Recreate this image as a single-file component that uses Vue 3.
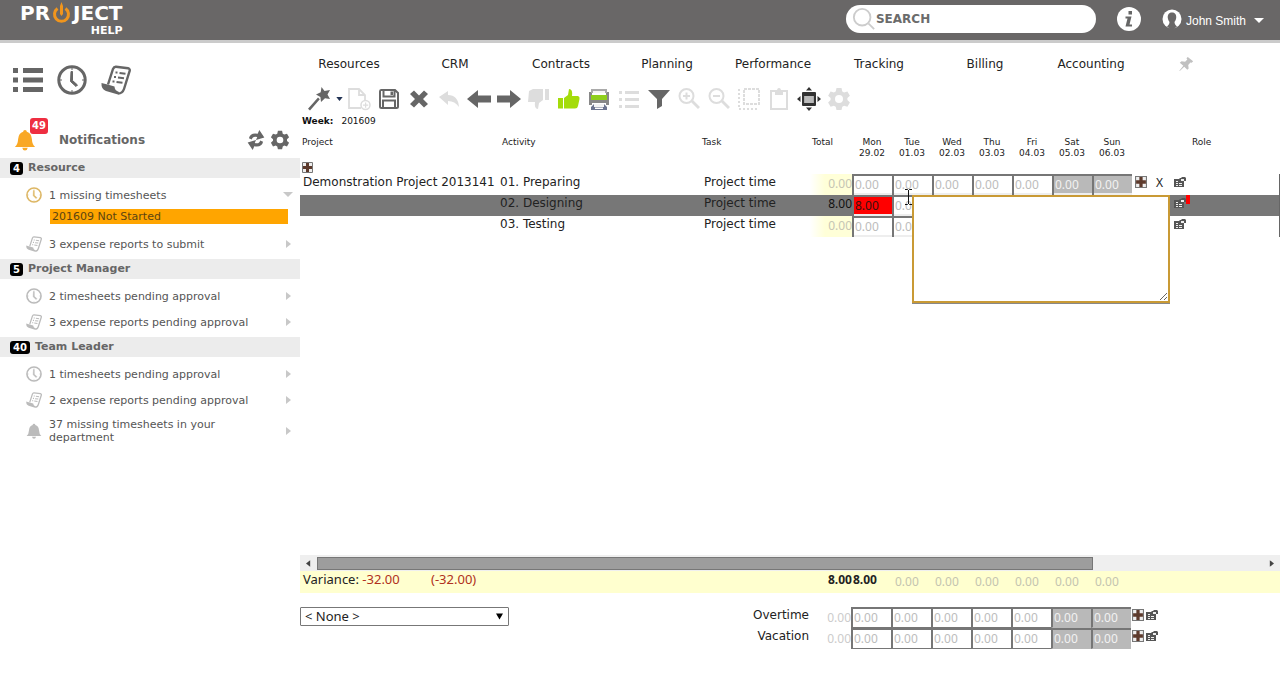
<script setup>
import { ref } from 'vue'

const menu = ['Resources', 'CRM', 'Contracts', 'Planning', 'Performance', 'Tracking', 'Billing', 'Accounting']

const tools = [
  { icon: 'new', label: 'New', tone: 'off' },
  { icon: 'save', label: 'Save', tone: 'on' },
  { icon: 'delete', label: 'Delete', tone: 'on' },
  { icon: 'undo', label: 'Undo', tone: 'off' },
  { icon: 'prev', label: 'Previous week', tone: 'on' },
  { icon: 'next', label: 'Next week', tone: 'on' },
  { icon: 'reject', label: 'Reject', tone: 'off' },
  { icon: 'approve', label: 'Approve', tone: 'green' },
  { icon: 'print', label: 'Print', tone: 'on' },
  { icon: 'rows', label: 'List', tone: 'off' },
  { icon: 'filter', label: 'Filter', tone: 'on' },
  { icon: 'zoomin', label: 'Zoom in', tone: 'off' },
  { icon: 'zoomout', label: 'Zoom out', tone: 'off' },
  { icon: 'copy', label: 'Copy', tone: 'off' },
  { icon: 'paste', label: 'Paste', tone: 'off' },
  { icon: 'full', label: 'Full screen', tone: 'dark' },
  { icon: 'gear', label: 'Settings', tone: 'off' }
]

const sections = [
  {
    count: 4,
    title: 'Resource',
    items: [
      { icon: 'clock', text: '1 missing timesheets', open: true, sub: '201609 Not Started', gold: true },
      { icon: 'report', text: '3 expense reports to submit' }
    ]
  },
  {
    count: 5,
    title: 'Project Manager',
    items: [
      { icon: 'clock', text: '2 timesheets pending approval' },
      { icon: 'report', text: '3 expense reports pending approval' }
    ]
  },
  {
    count: 40,
    title: 'Team Leader',
    items: [
      { icon: 'clock', text: '1 timesheets pending approval' },
      { icon: 'report', text: '2 expense reports pending approval' },
      { icon: 'bell', text: '37 missing timesheets in your department', tall: true }
    ]
  }
]

const days = [
  { name: 'Mon', date: '29.02' },
  { name: 'Tue', date: '01.03' },
  { name: 'Wed', date: '02.03' },
  { name: 'Thu', date: '03.03' },
  { name: 'Fri', date: '04.03' },
  { name: 'Sat', date: '05.03', weekend: true },
  { name: 'Sun', date: '06.03', weekend: true }
]

const blank = () => days.map(() => '0.00')
const rows = ref([
  { project: 'Demonstration Project 2013141', activity: '01. Preparing', total: '0.00', hours: blank(), first: true },
  { project: '', activity: '02. Designing', total: '8.00', hours: ['8.00', ...blank().slice(1)], active: true },
  { project: '', activity: '03. Testing', total: '0.00', hours: blank() }
])
const extras = ref([
  { name: 'Overtime', hours: blank() },
  { name: 'Vacation', hours: blank() }
])
const note = ref('')
</script>

<template>
  <div class="page">
    <svg class="sprite" aria-hidden="true">
      <symbol id="list" viewBox="0 0 30 30">
        <path d="M0 3h5v5H0zM10 3h20v5H10zM0 12.500h5v5H0zM10 12.500h20v5H10zM0 22h5v5H0zM10 22h20v5H10z" />
      </symbol>
      <symbol id="clock" viewBox="0 0 30 30">
        <circle cx="15" cy="15" r="13.200" fill="none" stroke="currentColor" stroke-width="3" />
        <path d="M14 6.500h1.500v9l5 4.500-1.500 1.500-5.500-5zM15 3v2M3 15h2M25 15h2M15 25v2" stroke="currentColor" stroke-width="1" />
      </symbol>
      <symbol id="report" viewBox="0 0 30 30">
        <path d="M7 19.500L12 4Q13 1.500 15 1.700L27 3.200Q29.500 4 28.500 6.500L23 24Q21.500 28.500 17 28.500" fill="none" stroke="currentColor" stroke-width="2.400" />
        <path d="M.5 18l6 1.500 7 2q0 4 4.500 5.500l-1 2.500L5 26Q0 24 .5 18z" />
        <path d="M14.500 7.500h2M18.500 8l6 .8M13 12h2M17 12.500l6 .8M11.500 16.500h2M15.500 17l6 .8" fill="none" stroke="currentColor" stroke-width="2" />
      </symbol>
      <symbol id="bell" viewBox="0 0 24 24">
        <path d="M12 1q2 0 2 2 5 1.500 5.500 8 .3 6 3.500 8.500H1Q4.200 17 4.500 11 5 4.500 10 3q0-2 2-2zM9 20.500h6q-.5 3-3 3t-3-3z" />
      </symbol>
      <symbol id="gear" viewBox="0 0 24 24">
        <path fill-rule="evenodd" d="M9.500 1h5l.8 3.400 1.800 1 3.300-1 2.500 4.300-2.500 2.400v2l2.500 2.300-2.500 4.300-3.300-1-1.800 1-.8 3.300h-5l-.8-3.300-1.800-1-3.300 1-2.500-4.300 2.500-2.400v-2L1.100 8.700l2.500-4.300 3.300 1 1.800-1zM12 8a4 4 0 1 0 0 8 4 4 0 0 0 0-8z" />
      </symbol>
      <symbol id="sync" viewBox="0 0 24 24">
        <path d="M3.500 10Q5 3 14 4.500L16 0l6 9-10 3 1.500-3.500Q8 7 7 11.500zM20.500 14Q19 21 10 19.500L8 24l-6-9 10-3-1.500 3.500Q16 17 17 12.500z" />
      </symbol>
      <symbol id="wand" viewBox="0 0 24 24">
        <path d="M14.500 0l3 4 5.500-1-2.500 4.500L23 12l-5-.8-4 3.800-.6-5L9 7.500l4.700-2.300zM11 10.500l1.800 1.800L3 23.500 1 21.700z" />
      </symbol>
      <symbol id="new" viewBox="0 0 24 24">
        <path d="M14 21H2V2h10l6 6v5M12 2v6h6" fill="none" stroke="currentColor" stroke-width="1.800" />
        <circle cx="18.500" cy="18" r="4.500" fill="none" stroke="currentColor" stroke-width="1.500" />
        <path d="M18 15.500h1.200v2h2v1.200h-2v2H18v-2h-2v-1.200h2z" />
      </symbol>
      <symbol id="save" viewBox="0 0 24 24">
        <path d="M4 3h14l3 3v13.500q0 1.500-1.500 1.500h-15Q3 21 3 19.500V4.500Q3 3 4 3zM6.500 3v6.500h11V3M6 21v-7.500h12V21" fill="none" stroke="currentColor" stroke-width="2" />
        <path d="M13.500 4.500H16V8h-2.500z" />
      </symbol>
      <symbol id="delete" viewBox="0 0 24 24">
        <path d="M3 7l4-3.500 5 5 5-5L21 7l-5 5 5 5-4 3.500-5-5-5 5L3 17l5-5z" />
      </symbol>
      <symbol id="undo" viewBox="0 0 24 24">
        <path d="M2 10l9-6v4q10 0 11 12-4-6-11-6v4z" />
      </symbol>
      <symbol id="prev" viewBox="0 0 24 24">
        <path d="M0 12L11 3v5.500h13v7H11V21z" />
      </symbol>
      <symbol id="next" viewBox="0 0 24 24">
        <path d="M24 12L13 3v5.500H0v7h13V21z" />
      </symbol>
      <symbol id="reject" viewBox="0 0 24 24">
        <path d="M2 4l4-2h10v11l-4 3-1 6q-4 0-3-7H1zM18 2h4v11h-4z" />
      </symbol>
      <symbol id="approve" viewBox="0 0 24 24">
        <path d="M1 11h5v10.500H1zM7 11l4-3 1-6q4 0 3 7h6q2 .5 1.500 3L21 19q-.5 2.500-3 2.500H7z" />
      </symbol>
      <symbol id="print" viewBox="0 0 24 24">
        <path d="M2 5h3v8h14V5h3v13h-3v-2H5v2H2z" fill="#888" />
        <path d="M4 2h16v4H4z" fill="#aaa" />
        <path d="M4 8h16v5H4z" fill="#8fcf1c" />
        <path d="M6 4h12v2H6zM7 17h10v4H7z" fill="#f4f4f4" />
        <path d="M4 20l3-3v3h10v-3l3 3v3H4zm4 .5V22h8v-1.500z" fill="#6d7590" fill-rule="evenodd" />
      </symbol>
      <symbol id="rows" viewBox="0 0 24 24">
        <path d="M2 4h3v3H2zM8 4h14v3H8zM2 11h3v3H2zM8 11h14v3H8zM2 18h3v3H2zM8 18h14v3H8z" />
      </symbol>
      <symbol id="filter" viewBox="0 0 24 24">
        <path d="M1 3h22l-8 9v7l-5 3V12z" />
      </symbol>
      <symbol id="zoomin" viewBox="0 0 24 24">
        <circle cx="9.500" cy="9" r="7" fill="none" stroke="currentColor" stroke-width="2" />
        <path d="M8.500 5.500h2V8H13v2h-2.500v2.500h-2V10H6V8h2.500zM14 15l2-2 7 7-2 2z" />
      </symbol>
      <symbol id="zoomout" viewBox="0 0 24 24">
        <circle cx="9.500" cy="9" r="7" fill="none" stroke="currentColor" stroke-width="2" />
        <path d="M6 8h7v2H6zM14 15l2-2 7 7-2 2z" />
      </symbol>
      <symbol id="copy" viewBox="0 0 24 24">
        <path d="M7 2h15v15H7z" fill="none" stroke="currentColor" stroke-width="2" stroke-dasharray="3 1" />
        <path d="M2 2v20h20" fill="none" stroke="currentColor" stroke-width="2" stroke-dasharray="2 2" />
      </symbol>
      <symbol id="paste" viewBox="0 0 24 24">
        <path d="M4 4h16v18H4z" fill="none" stroke="currentColor" stroke-width="2" />
        <path d="M8 4h2q0-3 2-3t2 3h2v4H8z" />
      </symbol>
      <symbol id="full" viewBox="0 0 24 24">
        <path fill-rule="evenodd" d="M6 5h12q1 0 1 1v12q0 1-1 1H6q-1 0-1-1V6q0-1 1-1zm1.500 4v7h9V9zM12 0l3 3.500H9zM12 24l3-3.500H9zM0 12l3.500-3v6zM24 12l-3.500-3v6z" />
        <path d="M7.500 9h9v7h-9z" fill="#bbb" />
      </symbol>
      <symbol id="pin" viewBox="0 0 18 18">
        <path d="M11 1l6 5-1.500 1.500-1.500-.3-2.500 3 .5 3.800-1.500 1.500-3.500-3.500L2 17l-.5-.5 4.500-5.500L2 7.500 4 6l4 .5 2.500-2.500L9.500 2.500z" />
      </symbol>
      <symbol id="plus" viewBox="0 0 11 11">
        <path d="M.5.5h10v10H.5z" fill="#eee" stroke="#777" />
        <path d="M4 1h3v3h3v3H7v3H4V7H1V4h3z" fill="#5d3a2c" />
      </symbol>
      <symbol id="note" viewBox="0 0 12 12">
        <path d="M0 3h5l1-1h1l1-1h3l1 1v3h-2v6H0z" fill="#555" />
        <path d="M2 5h2v1H2zM2 7h2v1H2zM5 7h3v1H5zM2 9h2v1H2zM5 9h3v1H5zM7 3h3v2H7z" fill="#eee" />
      </symbol>
    </svg>

    <header class="top">
      <a class="logo" href="#" aria-label="Project Help">
        <span class="word">PR<svg class="power" viewBox="0 0 20 22"><path d="M6 6.500a7 7 0 1 0 8 0" fill="none" stroke="#f0951d" stroke-width="3" /><path d="M8.500 4L10 0l1.500 4v8L10 14l-1.500-2z" fill="#f0951d" /></svg>JECT</span>
        <span class="help">HELP</span>
      </a>
      <label class="search">
        <svg viewBox="0 0 26 26"><circle cx="11" cy="11" r="9" fill="none" stroke="#ccc" stroke-width="2" /><path d="M18 18l6 6" stroke="#ccc" stroke-width="2" /></svg>
        <input type="text" placeholder="SEARCH" aria-label="Search" />
      </label>
      <button class="info" aria-label="Information">
        <svg viewBox="0 0 24 24"><circle cx="12" cy="12" r="12" fill="#fff" /><path d="M11.500 4h3.500v3.500h-3.500zM8.500 9.500h6l-2 8h2.500v2H8.500l2-8h-2z" fill="#666" /></svg>
      </button>
      <button class="user">
        <svg class="avatar" viewBox="0 0 20 20"><circle cx="10" cy="10" r="9.500" fill="#fff" /><path d="M10 3.500c3.500 0 4.500 2.500 4.200 5.500-.2 2-1.200 3-1.700 4 0 2 1 3 2.500 4.500L12 20H8l-3-2.500C6.500 16 7.500 15 7.500 13c-.5-1-1.500-2-1.700-4-.3-3 .7-5.500 4.200-5.500z" fill="#696767" /></svg>
        <span>John Smith</span>
        <svg class="caret" viewBox="0 0 10 5"><path d="M0 0h10L5 5z" fill="#fff" /></svg>
      </button>
    </header>

    <div class="body">
      <aside class="side">
        <div class="shortcuts">
          <button aria-label="Lists"><svg><use href="#list" /></svg></button>
          <button aria-label="Timesheets"><svg><use href="#clock" /></svg></button>
          <button aria-label="Expense reports"><svg><use href="#report" /></svg></button>
        </div>
        <div class="notify">
          <span class="alarm"><svg><use href="#bell" /></svg><b>49</b></span>
          <h2>Notifications</h2>
          <button aria-label="Refresh"><svg><use href="#sync" /></svg></button>
          <button aria-label="Settings"><svg><use href="#gear" /></svg></button>
        </div>
        <section v-for="s in sections" :key="s.title">
          <h3><b>{{ s.count }}</b>{{ s.title }}</h3>
          <ul>
            <li v-for="i in s.items" :key="i.text">
              <a href="#" :class="['item', { tall: i.tall, gold: i.gold }]">
                <svg class="kind"><use :href="'#' + i.icon" /></svg>
                <span>{{ i.text }}</span>
                <svg class="mark" viewBox="0 0 10 10"><path v-if="i.open" d="M0 2h10L5 7z" /><path v-else d="M3 1l5 4-5 4z" /></svg>
              </a>
              <a v-if="i.sub" class="sub" href="#">{{ i.sub }}</a>
            </li>
          </ul>
        </section>
      </aside>

      <main class="main">
        <nav class="menu">
          <a v-for="m in menu" :key="m" href="#">{{ m }}</a>
          <svg class="pin"><use href="#pin" /></svg>
        </nav>
        <div class="tools">
          <button class="on wand" aria-label="Wizard"><svg><use href="#wand" /></svg></button>
          <button class="drop" aria-label="Wizard options"><svg viewBox="0 0 8 5"><path d="M0 0h8L4 5z" /></svg></button>
          <button v-for="t in tools" :key="t.icon" :class="t.tone" :aria-label="t.label"><svg><use :href="'#' + t.icon" /></svg></button>
        </div>
        <p class="week"><b>Week:</b><span>201609</span></p>

        <div class="sheet">
          <table>
            <colgroup>
              <col class="c-project" /><col class="c-activity" /><col class="c-task" /><col class="c-total" />
              <col v-for="d in days" :key="d.name" class="c-day" />
              <col class="c-act" /><col />
            </colgroup>
            <thead>
              <tr>
                <th>Project</th>
                <th>Activity</th>
                <th>Task</th>
                <th>Total</th>
                <th v-for="d in days" :key="d.name" class="day">{{ d.name }}<br /><span>{{ d.date }}</span></th>
                <th></th>
                <th>Role</th>
              </tr>
            </thead>
            <tbody>
              <tr class="add">
                <td colspan="13"><button aria-label="Add project"><svg><use href="#plus" /></svg></button></td>
              </tr>
              <tr v-for="r in rows" :key="r.activity" :class="['line', { active: r.active }]">
                <td class="name">{{ r.project }}</td>
                <td>{{ r.activity }}</td>
                <td class="task">Project time</td>
                <td class="total">{{ r.total }}</td>
                <td v-for="(d, n) in days" :key="d.name" class="cell">
                  <input v-model="r.hours[n]" type="text" :class="{ weekend: d.weekend, over: r.active && n === 0 }" :aria-label="r.activity + ' ' + d.name" />
                </td>
                <td>
                  <div class="acts">
                    <button v-if="r.first" aria-label="Add row"><svg><use href="#plus" /></svg></button>
                    <button v-if="r.first" class="x" aria-label="Remove row">X</button>
                    <button class="memo" aria-label="Note"><svg><use href="#note" /></svg></button>
                  </div>
                </td>
                <td class="role"><i v-if="r.active"></i></td>
              </tr>
            </tbody>
          </table>
          <textarea v-model="note" class="comment" aria-label="Comment"></textarea>
          <svg class="cursor" viewBox="0 0 7 16"><path d="M0 .5h2.500l1 1 1-1H7M3.500 1v14M0 15.500h2.500l1-1 1 1H7" fill="none" stroke="#111" /></svg>
        </div>

        <div class="bar">
          <button aria-label="Scroll left"><svg viewBox="0 0 6 8"><path d="M5 0v8L0 4z" /></svg></button>
          <div class="track"><div class="thumb"></div></div>
          <button aria-label="Scroll right"><svg viewBox="0 0 6 8"><path d="M1 0v8l5-4z" /></svg></button>
        </div>

        <div class="variance">
          <span class="label">Variance: <em>-32.00</em></span>
          <em class="paren">(-32.00)</em>
          <b>8.00</b><b class="mon">8.00</b>
          <span v-for="n in 6" :key="n" class="zero">0.00</span>
        </div>

        <div class="foot">
          <div class="pick">
            <select aria-label="Filter">
              <option>&lt; None &gt;</option>
            </select>
            <svg viewBox="0 0 8 7"><path d="M0 0h8L4 7z" /></svg>
          </div>
          <table class="extra">
            <tbody>
              <tr v-for="e in extras" :key="e.name">
                <th>{{ e.name }}</th>
                <td class="sum">0.00</td>
                <td v-for="(d, n) in days" :key="d.name" class="cell">
                  <input v-model="e.hours[n]" type="text" :class="{ weekend: d.weekend }" :aria-label="e.name + ' ' + d.name" />
                </td>
                <td>
                  <div class="acts">
                    <button aria-label="Add row"><svg><use href="#plus" /></svg></button>
                    <button aria-label="Note"><svg><use href="#note" /></svg></button>
                  </div>
                </td>
              </tr>
            </tbody>
          </table>
        </div>
      </main>
    </div>
  </div>
</template>

<style>
body {
  margin: 0;
  background: #fff;
}
</style>

<style scoped>
* {
  box-sizing: border-box;
}
.page {
  display: flex;
  flex-direction: column;
  min-height: 100vh;
  font: 12px/16px "DejaVu Sans", Verdana, sans-serif;
  color: #222;
}
.sprite {
  position: absolute;
  width: 0;
  height: 0;
}
svg {
  display: block;
  flex: none;
  fill: currentColor;
}
button {
  display: block;
  flex: none;
  padding: 0;
  border: 0;
  background: none;
  color: inherit;
  font: inherit;
}
a {
  color: inherit;
  text-decoration: none;
}
h2, h3, ul, p {
  margin: 0;
  padding: 0;
}
li {
  list-style: none;
}

.top {
  display: flex;
  align-items: center;
  height: 43px;
  padding: 0 16px 2px 20px;
  border-bottom: 3px solid #cbcbcb;
  background: #696767;
  color: #fff;
}
.logo {
  margin-right: auto;
  font-weight: bold;
}
.word {
  display: flex;
  align-items: center;
  height: 22px;
  font-size: 20px;
  line-height: 22px;
}
.power {
  width: 23px;
  height: 22px;
}
.help {
  display: block;
  text-align: right;
  font-size: 11px;
  line-height: 13px;
}
.search {
  display: flex;
  align-items: center;
  width: 250px;
  height: 28px;
  padding-left: 6px;
  border-radius: 14px;
  background: #fff;
}
.search svg {
  width: 24px;
  height: 24px;
}
.search input {
  flex: 1;
  min-width: 0;
  padding: 0;
  border: 0;
  outline: 0;
  background: none;
  font: bold 12px "DejaVu Sans", sans-serif;
}
.search input::placeholder {
  color: #6b6b6b;
  opacity: 1;
}
.info {
  margin: 0 21px;
}
.info svg {
  width: 24px;
  height: 24px;
}
.user {
  display: flex;
  align-items: center;
  gap: 4px;
  font: 12px "Liberation Sans", Arial, sans-serif;
}
.user span, .user .caret {
  margin-top: 3px;
}
.avatar {
  width: 20px;
  height: 20px;
}
.caret {
  width: 10px;
  height: 5px;
  margin-left: 4px;
}

.body {
  display: flex;
  flex: 1;
}
.side {
  flex: none;
  width: 300px;
  color: #555;
  font-size: 11px;
}
.shortcuts {
  display: flex;
  gap: 14px;
  padding: 22px 13px;
  color: #666;
}
.shortcuts svg {
  width: 30px;
  height: 30px;
}
.notify {
  display: flex;
  align-items: center;
  gap: 4px;
  height: 41px;
  padding: 4px 10px 0 14px;
  color: #666;
}
.alarm {
  position: relative;
  width: 41px;
  color: #f9a825;
}
.alarm svg {
  width: 22px;
  height: 24px;
}
.alarm b {
  position: absolute;
  left: 16px;
  top: -10px;
  width: 18px;
  border-radius: 3px;
  background: #ee2e41;
  color: #fff;
  text-align: center;
  font-size: 10px;
  line-height: 16px;
}
h2 {
  flex: 1;
  font-size: 12px;
}
.notify button svg {
  width: 20px;
  height: 20px;
}
h3 {
  display: flex;
  align-items: center;
  gap: 5px;
  height: 20px;
  padding-left: 10px;
  background: #ececec;
  color: #666;
  font-size: 11px;
}
h3 b {
  min-width: 13px;
  padding: 0 3px;
  border-radius: 3px;
  background: #000;
  color: #fff;
  text-align: center;
  font-size: 10px;
  line-height: 13px;
}
ul {
  padding: 4px 0 2px;
}
.item {
  display: flex;
  align-items: center;
  gap: 7px;
  height: 26px;
  padding: 0 7px 0 26px;
  line-height: 13px;
}
.item.tall {
  height: 36px;
}
.item span {
  flex: 1;
  padding-right: 10px;
}
.kind {
  width: 16px;
  height: 16px;
  color: #bbb;
}
.gold .kind {
  color: #ddb765;
}
.mark {
  width: 10px;
  height: 10px;
  color: #c8c8c8;
}
.sub {
  display: block;
  margin: 1px 12px 7px 50px;
  padding-left: 2px;
  background: #ffa500;
  color: #5c4410;
  line-height: 15px;
}

.main {
  display: flex;
  flex: 1;
  flex-direction: column;
  min-width: 0;
  padding-bottom: 31px;
}
.menu {
  display: flex;
  align-items: center;
  height: 41px;
  margin-left: -4px;
}
.menu a {
  width: 106px;
  text-align: center;
}
.pin {
  width: 16px;
  height: 16px;
  margin-left: 34px;
  color: #c0c0c0;
}
.tools {
  display: flex;
  align-items: center;
  gap: 6px;
  height: 30px;
  padding-left: 7px;
  color: #666;
}
.tools svg {
  width: 24px;
  height: 24px;
}
.tools .wand {
  margin-right: -6px;
}
.tools .drop {
  width: 16px;
  margin-right: -6px;
  padding-left: 5px;
  color: #235;
}
.tools .drop svg {
  width: 7px;
  height: 4px;
}
.tools .off {
  color: #ddd;
}
.tools .green {
  color: #a4dc0a;
}
.tools .dark {
  color: #333;
}
.week {
  display: flex;
  gap: 8px;
  padding-left: 2px;
  color: #111;
  font-size: 9px;
  line-height: 14px;
}

.sheet {
  position: relative;
  flex: 1;
  padding-top: 9px;
}
table {
  border-collapse: collapse;
}
.sheet table {
  width: 100%;
  table-layout: fixed;
}
.c-project, .c-activity {
  width: 200px;
}
.c-task {
  width: 110px;
}
.c-total {
  width: 42px;
}
.c-day {
  width: 40px;
}
.c-act {
  width: 58px;
}
th, td {
  padding: 0;
  font-weight: normal;
  text-align: left;
  white-space: nowrap;
}
thead th {
  height: 22px;
  padding-left: 2px;
  vertical-align: top;
  font-size: 9px;
  line-height: 11px;
}
thead .day {
  padding: 0;
  text-align: center;
}
.add td {
  height: 15px;
  padding: 1px 0 0 2px;
}
.add svg {
  width: 11px;
  height: 11px;
}
.line td {
  height: 21px;
  line-height: 17px;
  vertical-align: top;
}
.line .role {
  border-right: 1px solid #666;
}
.active {
  background: #777;
}
.line .name {
  padding-left: 3px;
}
.line .task {
  padding-left: 4px;
}
.line .total {
  background: linear-gradient(90deg, #fff, #ffffd8 15px);
  color: #c6c6b4;
  text-align: right;
  font: 12px/20px "Noto Sans", sans-serif;
}
.line.active .total {
  background: none;
  color: #111;
  line-height: 17px;
}
.cell input {
  display: block;
  width: 40px;
  height: 21px;
  padding: 0 0 3px 1px;
  border: 0 solid #767676;
  border-width: 2px 0 0 2px;
  border-radius: 0;
  outline: 0;
  background: #fff;
  box-shadow: inset 0 -2px #eee;
  color: #bcbcbc;
  font: 12px/16px "Noto Sans", sans-serif;
}
.cell .weekend {
  background: #b9b9b9;
  color: #f2f2f2;
}
.cell .over {
  background: #f00;
  color: #3a1010;
}
.acts {
  display: flex;
  align-items: center;
  height: 16px;
  padding-left: 3px;
}
.acts svg {
  width: 12px;
  height: 12px;
}
.acts .x {
  margin-left: 9px;
  font: 12px "Noto Sans", sans-serif;
}
.acts .memo {
  margin-left: auto;
  margin-right: 4px;
}
.role i {
  display: block;
  width: 4px;
  height: 9px;
  margin-left: -4px;
  background: #f00;
}
.comment {
  position: absolute;
  left: 612px;
  top: 67px;
  width: 258px;
  height: 108px;
  border: 2px solid #c99a35;
  outline: 0;
  background: #fff;
  box-shadow: inset 0 0 0 0 #888, 0 1px #888;
}
.cursor {
  position: absolute;
  left: 605px;
  top: 61px;
  width: 7px;
  height: 16px;
}

.bar {
  display: flex;
  align-items: center;
  height: 16px;
  background: #efefef;
  color: #444;
}
.bar button {
  width: 17px;
  padding-left: 6px;
}
.bar button svg {
  width: 5px;
  height: 7px;
}
.track {
  flex: 1;
}
.thumb {
  width: 82%;
  height: 13px;
  border: 1px solid #777;
  background: #9d9d9d;
}
.variance {
  display: flex;
  height: 22px;
  padding-left: 3px;
  background: #ffffcf;
  font: 12px/17px "Noto Sans", sans-serif;
}
.variance em {
  color: #b03020;
  font-style: normal;
}
.label {
  width: 128px;
  font-size: 13px;
}
.paren {
  width: 397px;
  font-size: 13px;
}
.variance b {
  width: 25px;
}
.variance .mon {
  width: 42px;
}
.zero {
  width: 40px;
  color: #c4c4b0;
  line-height: 22px;
}
.foot {
  display: flex;
  align-items: flex-start;
  padding-top: 14px;
}
.pick {
  position: relative;
  width: 209px;
}
.pick select {
  display: block;
  width: 100%;
  height: 19px;
  padding: 0 4px;
  border: 1px solid #777;
  border-radius: 1px;
  background: #fff;
  color: #222;
  font: 13px/17px "Noto Sans", sans-serif;
  appearance: none;
}
.pick svg {
  position: absolute;
  right: 6px;
  top: 6px;
  width: 7px;
  height: 7px;
  color: #000;
  pointer-events: none;
}
.extra th {
  width: 300px;
  line-height: 16px;
  text-align: right;
  vertical-align: top;
}
.extra .sum {
  width: 42px;
  color: #ccc;
  text-align: right;
  font: 12px/21px "Noto Sans", sans-serif;
}
.extra .acts {
  gap: 2px;
  padding-left: 1px;
}
.extra td {
  height: 21px;
  vertical-align: top;
}
.extra .cell input {
  padding-bottom: 1px;
  border-bottom-width: 1px;
  box-shadow: none;
}
.extra .weekend {
  border-bottom-color: #b9b9b9;
}
</style>
